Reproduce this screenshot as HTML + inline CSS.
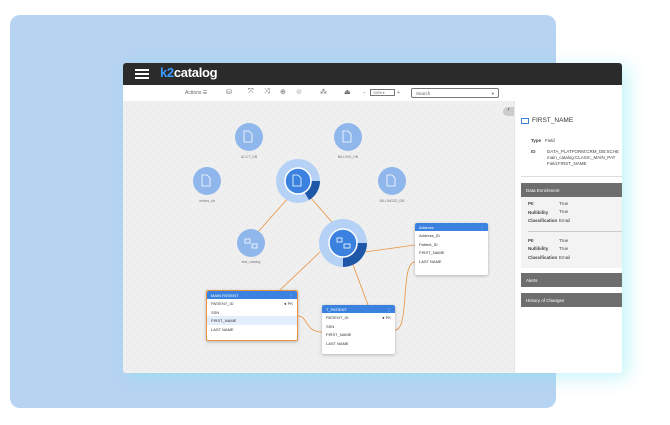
<!DOCTYPE html>
<html><head><style>
*{margin:0;padding:0;box-sizing:border-box}
body{width:670px;height:425px;background:#fff;position:relative;overflow:hidden;font-family:"Liberation Sans",sans-serif}
.a{position:absolute}
.bg{left:10px;top:15px;width:546px;height:393px;background:#b7d3f2;border-radius:10px}
.win{left:123px;top:63px;width:499px;height:310px;background:#fff;box-shadow:6px 4px 18px rgba(120,230,240,.45);overflow:hidden;border-radius:3px}
.hdr{left:0;top:0;width:499px;height:22px;background:#2b2b2b}
.tb{left:0;top:22px;width:499px;height:16px;background:#fff;font-size:5px;color:#666}
.cv{left:0;top:38px;width:391px;height:272px;background:#efefef;background-image:radial-gradient(#dcdcdc .6px,transparent .7px);background-size:8px 8px}
.rp{left:391px;top:38px;width:108px;height:272px;background:#fff;border-left:1px solid #e6e6e6;font-size:4.5px;color:#444}
.sec{position:absolute;left:6px;width:102px;height:14px;background:#6e6e6e;color:#fff;font-size:4.5px;padding:5px 0 0 5px}
.tbl{position:absolute;background:#fff;border-radius:2px;box-shadow:0 1px 3px rgba(0,0,0,.25);font-size:4px;color:#333}
.tbl .h{height:8px;background:#3b82e0;color:#fff;font-size:4px;padding:2px 4px;border-radius:2px 2px 0 0}
.tbl div.r{height:8.5px;padding:2px 4px}
</style></head><body>
<div class="a bg"></div>
<div class="a win">
 <div class="a hdr">
  <div class="a" style="left:12px;top:6px;width:14px;height:2px;background:#fff;box-shadow:0 4px 0 #fff,0 8px 0 #fff"></div>
  <div class="a" style="left:37px;top:2px;font-size:13px;font-weight:bold;color:#fff;letter-spacing:-.3px"><span style="color:#3b9cff">k2</span>catalog</div>
 </div>
 <div class="a tb">
  <span class="a" style="left:62px;top:5px">Actions ☰</span>
  <span class="a" style="left:103px;top:3px;font-size:7px">⛁</span>
  <span class="a" style="left:125px;top:3px;font-size:7px">⤧</span>
  <span class="a" style="left:141px;top:3px;font-size:7px">⤨</span>
  <span class="a" style="left:157px;top:3px;font-size:7px">⊕</span>
  <span class="a" style="left:173px;top:3px;font-size:7px;color:#aaa">⊘</span>
  <span class="a" style="left:197px;top:3px;font-size:7px">⁂</span>
  <span class="a" style="left:221px;top:3px;font-size:7px">⏏</span>
  <span class="a" style="left:240px;top:5px">−</span>
  <div class="a" style="left:247px;top:4px;width:25px;height:7px;border:1px solid #777;font-size:3.5px;padding:1px 2px">100% ▾</div>
  <span class="a" style="left:274px;top:5px">+</span>
  <div class="a" style="left:288px;top:3px;width:88px;height:10px;border:1px solid #777;border-radius:2px;padding:2px 4px;font-size:4.5px">Search<span style="float:right">▾</span></div>
 </div>
 <div class="a cv">
  <svg class="a" style="left:0;top:0" width="391" height="272" viewBox="123 101 391 272">
   <g stroke="#e8913e" stroke-width="0.8" fill="none">
    <path d="M289 197 L258 232"/><path d="M310 197 L332 222"/><path d="M320 252 L280 290"/>
    <path d="M352 262 L368 305"/><path d="M365 252 L415 245"/>
    <path d="M298 316 C308 316 305 332 322 332"/><path d="M395 330 C410 330 400 262 415 262"/>
   </g>
   <g fill="#8fb7ec">
    <circle cx="249" cy="137" r="14"/><circle cx="348" cy="137" r="14"/>
    <circle cx="207" cy="181" r="14"/><circle cx="392" cy="181" r="14"/>
    <circle cx="251" cy="243" r="14"/>
   </g>
   <g font-size="3.5" fill="#777" text-anchor="middle">
    <text x="249" y="158">ACCT_DB</text><text x="348" y="158">BILLING_DB</text>
    <text x="207" y="202">orders_kb</text><text x="392" y="202">BILLING2D_DB</text>
    <text x="251" y="263">test_catalog</text>
   </g>
   <circle cx="298" cy="181" r="22" fill="#b5d2f6"/>
   <path d="M298 181 L320 181 A22 22 0 0 1 309 200 Z" fill="#1f57a8"/>
   <circle cx="298" cy="181" r="13" fill="#3b82e0" stroke="#fff" stroke-width="1.5"/>
   <circle cx="343" cy="243" r="24" fill="#b5d2f6"/>
   <path d="M343 243 L367 243 A24 24 0 0 1 343 267 Z" fill="#1f57a8"/>
   <circle cx="343" cy="243" r="14" fill="#3b82e0" stroke="#fff" stroke-width="1.5"/>
   <g fill="none" stroke="#fff" stroke-width="0.8">
    <path d="M244 131h5l3 3v8h-8z M207-0"/><path d="M343 131h5l3 3v8h-8z"/>
    <path d="M202 175h5l3 3v8h-8z"/><path d="M387 175h5l3 3v8h-8z"/>
    <path d="M293 175h5l3 3v8h-8z"/>
    <rect x="245" y="239" width="5" height="4"/><rect x="252" y="244" width="5" height="4"/>
    <rect x="337" y="238" width="5" height="4"/><rect x="344" y="244" width="6" height="4"/>
   </g>
  </svg>
  <div class="tbl" style="left:83px;top:189px;width:92px;height:51px;border:1px solid #e8913e">
   <div class="h">MAIN PATIENT<span style="float:right">⋮</span></div>
   <div class="r">PATIENT_ID<span style="float:right">● PK</span></div><div class="r">SSN</div>
   <div class="r" style="background:#e3edfb">FIRST_NAME</div><div class="r">LAST NAME</div>
  </div>
  <div class="tbl" style="left:199px;top:204px;width:73px;height:49px">
   <div class="h">T_PATIENT<span style="float:right">⋮</span></div>
   <div class="r">PATIENT_ID<span style="float:right">● PK</span></div><div class="r">SSN</div>
   <div class="r">FIRST_NAME</div><div class="r">LAST NAME</div>
  </div>
  <div class="tbl" style="left:292px;top:122px;width:73px;height:52px">
   <div class="h">Address<span style="float:right">⋮</span></div>
   <div class="r">Address_ID</div><div class="r">Patient_ID</div>
   <div class="r">FIRST_NAME</div><div class="r">LAST NAME</div>
  </div>
  <div class="a" style="left:380px;top:6px;width:11px;height:9px;background:#ccc;border-radius:5px 0 0 5px;font-size:6px;text-align:center;color:#333">›</div>
 </div>
 <div class="a rp">
  <div class="a" style="left:6px;top:17px;width:8px;height:6px;border:1px solid #3b82e0"></div>
  <div class="a" style="left:17px;top:16px;font-size:6.5px;color:#333">FIRST_NAME</div>
  <div class="a" style="left:16px;top:37px"><b>Type</b>&nbsp;&nbsp; Field</div>
  <div class="a" style="left:16px;top:48px;line-height:6px"><b>ID</b></div>
  <div class="a" style="left:32px;top:48px;line-height:6px;white-space:nowrap">DATA_PLATFORM:CRM_DB:SCHE<br>main_catalog:CLASS:_MAIN_PAT<br>Field:FIRST_NAME</div>
  <div class="a" style="left:6px;top:75px;width:102px;height:1px;background:#ddd"></div>
  <div class="sec" style="top:82px">Data Enrichment</div>
  <div class="a" style="left:6px;top:96px;width:102px;height:71px;background:#f3f3f3;line-height:8.5px;padding:3px 0 0 7px">
   <b>PII</b><span class="a" style="left:38px;top:3px">True</span><br><b>Nullibility</b><span class="a" style="left:38px;top:11px">True</span><br><b>Classification</b><span class="a" style="left:38px;top:20px">Email</span>
   <div style="height:1px;background:#ccc;margin:5px 0"></div>
   <b>PII</b><span class="a" style="left:38px;top:40px">True</span><br><b>Nullibility</b><span class="a" style="left:38px;top:48px">True</span><br><b>Classification</b><span class="a" style="left:38px;top:57px">Email</span>
  </div>
  <div class="sec" style="top:172px">Alerts</div>
  <div class="sec" style="top:192px">History of Changes</div>
 </div>
</div>
</body></html>
